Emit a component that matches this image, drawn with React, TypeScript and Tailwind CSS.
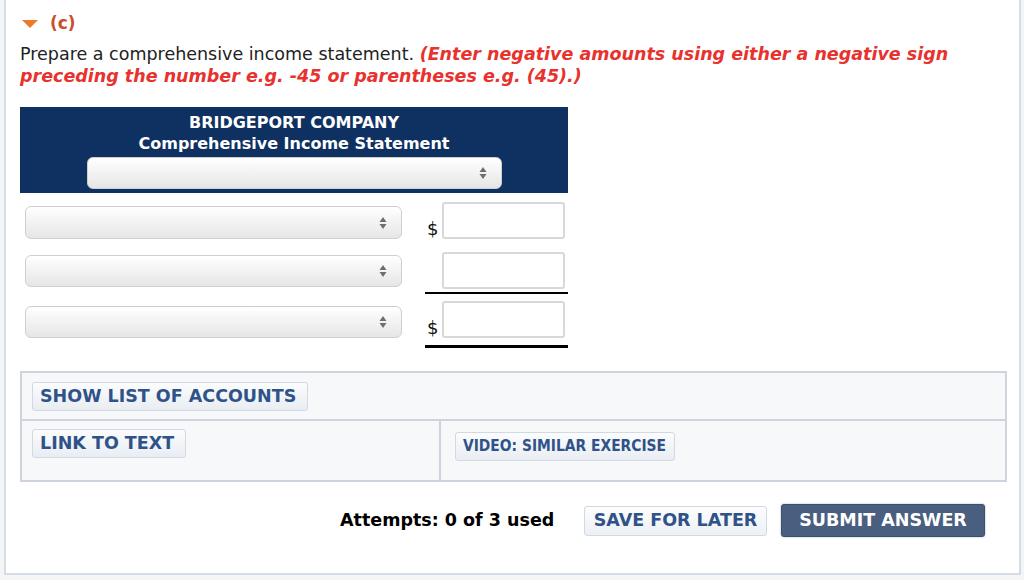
import React from "react";

const verd = { fontFamily: '"DejaVu Sans", Verdana, sans-serif' };
const tah = { fontFamily: '"DejaVu Sans Condensed", "DejaVu Sans", Tahoma, sans-serif' };

function Arrows() {
  return (
    <svg width="8" height="14" viewBox="0 0 8 14" className="shrink-0">
      <path d="M4 1 L7.5 6 L0.5 6 Z" fill="#6e6e6e" />
      <path d="M4 13 L7.5 8 L0.5 8 Z" fill="#6e6e6e" />
    </svg>
  );
}

function Select({ className }: { className: string }) {
  return (
    <div
      className={
        "flex items-center justify-end pr-[14px] rounded-[6px] border border-[#cfcfcf] bg-gradient-to-b from-[#ffffff] to-[#e6e6e6] shadow-[inset_0_1px_0_#fff] " +
        className
      }
    >
      <Arrows />
    </div>
  );
}

function Btn({ children, className }: { children: React.ReactNode; className: string }) {
  return (
    <div
      className={
        "flex items-center rounded-[3px] border border-[#d3d9e2] bg-gradient-to-b from-[#fbfcfd] to-[#e9edf2] text-[#2f5289] font-bold " +
        className
      }
    >
      {children}
    </div>
  );
}

export default function App() {
  return (
    <div className="w-[1024px] h-[580px] bg-[#f4f5f7] overflow-hidden">
      <div className="ml-[4px] w-[1017px] h-[575px] bg-white border-l-2 border-r-2 border-b-2 border-[#d6dce6] pl-[14px] pt-[12px]">
        <div className="flex items-center h-[24px]" style={verd}>
          <svg width="16" height="8" viewBox="0 0 16 8" className="ml-[2px]">
            <path d="M0 0 L16 0 L8 8 Z" fill="#ec7a2c" />
          </svg>
          <span className="ml-[12px] text-[17px] font-bold text-[#c8512a]">(c)</span>
        </div>
        <div className="mt-[7px] text-[17.5px] leading-[22px] text-[#222] w-[960px]" style={verd}>
          Prepare a comprehensive income statement.{" "}
          <span className="font-bold italic text-[#e8322d]">
            (Enter negative amounts using either a negative sign preceding the number e.g. -45 or parentheses e.g. (45).)
          </span>
        </div>

        <div className="mt-[20px] w-[548px]">
          <div className="bg-[#0f3162] h-[86px] flex flex-col items-center pt-[5px]" style={verd}>
            <div className="text-white font-bold text-[16px] leading-[21px]">BRIDGEPORT COMPANY</div>
            <div className="text-white font-bold text-[16px] leading-[21px]">Comprehensive Income Statement</div>
            <Select className="mt-[3px] w-[415px] h-[32px]" />
          </div>

          <div className="flex items-end mt-[9px]">
            <Select className="ml-[5px] w-[377px] h-[33px] mb-[0px]" />
            <div className="ml-[23px] w-[143px] flex items-end">
              <span className="text-[18px] text-[#111] leading-[20px] w-[17px] pl-[2px]" style={verd}>$</span>
              <div className="w-[123px] h-[37px] border-2 border-[#d8d8d8] rounded-[3px] bg-white" />
            </div>
          </div>

          <div className="flex items-start mt-[13px]">
            <Select className="ml-[5px] mt-[3px] w-[377px] h-[32px]" />
            <div className="ml-[23px] w-[143px] flex flex-col">
              <div className="flex">
                <span className="w-[17px]" />
                <div className="w-[123px] h-[37px] border-2 border-[#d8d8d8] rounded-[3px] bg-white" />
              </div>
              <div className="mt-[3px] h-[2px] bg-black w-[143px]" />
            </div>
          </div>

          <div className="flex items-start mt-[7px]">
            <Select className="ml-[5px] mt-[5px] w-[377px] h-[32px]" />
            <div className="ml-[23px] w-[143px] flex flex-col">
              <div className="flex items-end">
                <span className="text-[18px] text-[#111] leading-[20px] w-[17px] pl-[2px]" style={verd}>$</span>
                <div className="w-[123px] h-[37px] border-2 border-[#d8d8d8] rounded-[3px] bg-white" />
              </div>
              <div className="mt-[7px] h-[3px] bg-black w-[143px]" />
            </div>
          </div>
        </div>

        <div className="mt-[23px] w-[987px] border-2 border-[#cdd4de] bg-[#f6f8fa]">
          <div className="h-[48px] pl-[10px] pt-[9px] border-b-2 border-[#cdd4de]">
            <Btn className="w-[276px] h-[29px] pl-[7px] text-[17.5px]">
              <span style={verd}>SHOW LIST OF ACCOUNTS</span>
            </Btn>
          </div>
          <div className="flex h-[59px]">
            <div className="w-[419px] border-r-2 border-[#cdd4de] pl-[10px] pt-[8px]">
              <Btn className="w-[154px] h-[29px] pl-[7px] text-[17.5px]">
                <span style={verd}>LINK TO TEXT</span>
              </Btn>
            </div>
            <div className="pl-[14px] pt-[11px]">
              <Btn className="w-[220px] h-[29px] pl-[7px] text-[15.4px]">
                <span style={tah}>VIDEO: SIMILAR EXERCISE</span>
              </Btn>
            </div>
          </div>
        </div>

        <div className="flex items-center mt-[22px] pl-[320px]" style={verd}>
          <span className="text-[17.5px] font-bold text-black w-[244px]">Attempts: 0 of 3 used</span>
          <div className="w-[183px] h-[30px] flex items-center justify-center rounded-[3px] border border-[#d3d9e2] bg-gradient-to-b from-[#fdfdfe] to-[#edf0f4] text-[#2f5289] font-bold text-[17.5px]">
            SAVE FOR LATER
          </div>
          <div className="ml-[14px] w-[204px] h-[33px] flex items-center justify-center rounded-[3px] bg-[#4a5f7f] border border-[#3c4f6b] shadow-[0_0_2px_#9aa8bb] text-white font-bold text-[17.5px]">
            SUBMIT ANSWER
          </div>
        </div>
      </div>
    </div>
  );
}
